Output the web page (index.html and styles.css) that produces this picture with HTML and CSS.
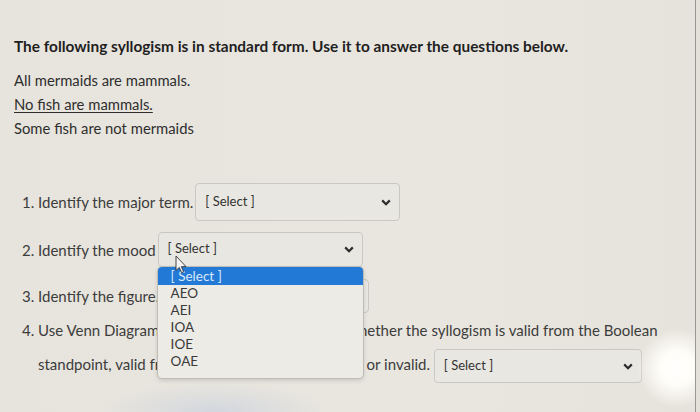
FILE: index.html
```html
<!DOCTYPE html>
<html>
<head>
<meta charset="utf-8">
<link rel="stylesheet" href="styles.css">
</head>
<body>
<div class="screen">
  <div class="page">
    <h1 class="title">The following syllogism is in standard form. Use it to answer the questions below.</h1>
    <div class="premises">
      <p>All mermaids are mammals.</p>
      <p class="underlined">No fish are mammals.</p>
      <p>Some fish are not mermaids</p>
    </div>
    <div class="questions">
      <div class="q q1">
        <span class="label">1. Identify the major term.</span>
        <span class="select s1"><span class="sel-text">[ Select ]</span><svg class="chev" viewBox="0 0 10 7"><path d="M1.2 1.4 5 5.2 8.8 1.4" fill="none" stroke="#2c2c2c" stroke-width="2.2"/></svg></span>
      </div>
      <div class="q q2">
        <span class="label">2. Identify the mood</span>
        <span class="select s2"><span class="sel-text">[ Select ]</span><svg class="chev" viewBox="0 0 10 7"><path d="M1.2 1.4 5 5.2 8.8 1.4" fill="none" stroke="#2c2c2c" stroke-width="2.2"/></svg>
          <ul class="dropdown">
            <li class="active">[ Select ]</li>
            <li>AEO</li>
            <li>AEI</li>
            <li>IOA</li>
            <li>IOE</li>
            <li>OAE</li>
          </ul>
          <svg class="cursor" viewBox="0 0 12 19"><path d="M1 1 V15.5 L4.3 12.4 L6.6 17.6 L8.6 16.7 L6.4 11.6 H11 Z" fill="#f4f4f4" stroke="#333" stroke-width="0.9"/></svg>
        </span>
      </div>
      <div class="q q3">
        <span class="label">3. Identify the figure.</span>
        <span class="select s3"><span class="sel-text">[ Select ]</span></span>
      </div>
      <div class="q4">4. Use Venn Diagrams and the rules to determine whether the syllogism is valid from the Boolean<br>standpoint, valid from the Aristotelian standpoint, or invalid. <span class="select s4"><span class="sel-text">[ Select ]</span><svg class="chev" viewBox="0 0 10 7"><path d="M1.2 1.4 5 5.2 8.8 1.4" fill="none" stroke="#2c2c2c" stroke-width="2.2"/></svg></span></div>
    </div>
  </div>
  <div class="glare"></div>
  <div class="tint"></div>
</div>
</body>
</html>
```
FILE: styles.css
```css
html, body {
  margin: 0;
  padding: 0;
}
body {
  width: 700px;
  height: 412px;
  overflow: hidden;
  background: #e4e1da;
  font-family: Lato, "Open Sans", sans-serif;
  color: #3a3a3a;
}
.screen {
  position: relative;
  width: 695px;
  height: 412px;
  border-right: 1px solid #9a9893;
  background: linear-gradient(90deg, #e7e4dd 0%, #e9e6df 60%, #e6e3dc 100%);
  overflow: hidden;
}
.page {
  padding: 36px 0 0 14px;
}
.title {
  margin: 0;
  font-size: 15.4px;
  line-height: 20px;
  font-weight: 700;
  color: #1f1f1f;
}
.premises {
  margin-top: 12px;
}
.premises p {
  margin: 0;
  font-size: 14.8px;
  line-height: 24px;
  color: #2e2e2e;
}
.underlined {
  text-decoration: underline;
  text-underline-offset: 2px;
}
.questions {
  margin-top: 43px;
  padding-left: 8px;
  font-size: 15px;
  color: #3c3c3c;
}
.q {
  display: flex;
  align-items: center;
}
.q1 {
  height: 38px;
}
.q2 {
  height: 35px;
  margin-top: 11px;
}
.q3 {
  height: 34px;
  margin-top: 12px;
}
.label {
  white-space: nowrap;
}
.select {
  position: relative;
  display: inline-flex;
  align-items: center;
  justify-content: space-between;
  box-sizing: border-box;
  width: 205px;
  padding: 0 8px 0 9px;
  border: 1px solid #c9c8c3;
  border-radius: 4px;
  background: #e9e7e1;
  font-size: 13px;
  color: #333;
}
.sel-text {
  margin-top: -3px;
}
.chev {
  width: 10px;
  height: 7px;
}
.s1 {
  height: 38px;
  margin-left: 2px;
}
.s2 {
  height: 35px;
  margin-left: 2px;
}
.s3 {
  height: 34px;
  margin-left: 5px;
}
.s4 {
  height: 34px;
  width: 208px;
  margin-left: 0;
  vertical-align: middle;
}
.q4 {
  padding-left: 16px;
  text-indent: -16px;
  line-height: 34px;
  white-space: nowrap;
}
.q4 .select {
  text-indent: 0;
}
.dropdown {
  position: absolute;
  top: 100%;
  left: -2px;
  z-index: 5;
  width: 205px;
  margin: 0;
  padding: 0 0 8px;
  list-style: none;
  background: #ecebe6;
  border: 1px solid #bdbcb7;
  border-radius: 5px;
  box-shadow: 0 2px 4px rgba(0,0,0,0.12);
  font-size: 13.5px;
  line-height: 17px;
  color: #3a3a3a;
  text-indent: 0;
}
.dropdown li {
  padding-left: 13px;
}
.dropdown li.active {
  height: 18px;
  line-height: 18px;
  background: #2379d6;
  color: #dbe9fb;
  border-radius: 4px 4px 0 0;
}
.cursor {
  position: absolute;
  left: 16px;
  top: 22px;
  z-index: 6;
  width: 12px;
  height: 19px;
}
.glare {
  position: absolute;
  right: -22px;
  top: 328px;
  width: 80px;
  height: 80px;
  border-radius: 50%;
  background: radial-gradient(circle, #ffffff 0%, #fffdf8 30%, rgba(255,253,245,0) 70%);
}
.tint {
  position: absolute;
  left: 100px;
  bottom: 0;
  width: 230px;
  height: 30px;
  background: radial-gradient(ellipse at 50% 100%, rgba(170,188,220,0.35) 0%, rgba(170,188,220,0) 70%);
}
```
